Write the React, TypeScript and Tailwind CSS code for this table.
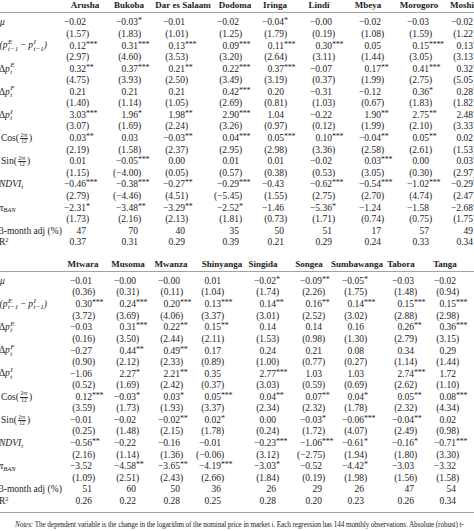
import type { ReactNode } from 'react';

type Block = {
  cols: string[];
  // header box width per column, header text is centred inside it
  heads: string[];
  grid: string;
  rows: string[][];
};

const TOP: Block = {
  cols: ['Arusha', 'Bukoba', 'Dar es Salaam', 'Dodoma', 'Iringa', 'Lindi', 'Mbeya', 'Morogoro', 'Moshi'],
  heads: ['w-[48px]', 'w-[32px]', 'w-[46px]', 'w-[42px]', 'w-[32px]', 'w-[24px]', 'w-[24px]', 'w-[30px]', 'w-[28px]'],
  grid: 'grid-cols-[61px_52px_47px_54px_45px_48px_49px_48px_44px_40px]',
  rows: [
    ['−0.02', '−0.03*', '−0.01', '−0.02', '−0.04*', '−0.00', '−0.02', '−0.03', '−0.02'],
    ['(1.57)', '(1.83)', '(1.01)', '(1.25)', '(1.79)', '(0.19)', '(1.08)', '(1.59)', '(1.22)'],
    ['0.12***', '0.31***', '0.13***', '0.09***', '0.11***', '0.30***', '0.05', '0.15****', '0.13***'],
    ['(2.97)', '(4.60)', '(3.53)', '(3.20)', '(2.64)', '(3.11)', '(1.44)', '(3.05)', '(3.13)'],
    ['0.32**', '0.37***', '0.21**', '0.22***', '0.37***', '−0.07', '0.17**', '0.41***', '0.32***'],
    ['(4.75)', '(3.93)', '(2.50)', '(3.49)', '(3.19)', '(0.37)', '(1.99)', '(2.75)', '(5.05)'],
    ['0.21', '0.21', '0.21', '0.42***', '0.20', '−0.31', '−0.12', '0.36*', '0.28*'],
    ['(1.40)', '(1.14)', '(1.05)', '(2.69)', '(0.81)', '(1.03)', '(0.67)', '(1.83)', '(1.82)'],
    ['3.03***', '1.96*', '1.98**', '2.90***', '1.04', '−0.22', '1.90**', '2.75**', '2.48***'],
    ['(3.07)', '(1.69)', '(2.24)', '(3.26)', '(0.97)', '(0.12)', '(1.99)', '(2.10)', '(3.33)'],
    ['0.03**', '0.03', '−0.03**', '0.04***', '0.05***', '0.10***', '−0.04**', '0.05**', '0.02'],
    ['(2.19)', '(1.58)', '(2.37)', '(2.95)', '(2.98)', '(3.36)', '(2.58)', '(2.61)', '(1.53)'],
    ['0.01', '−0.05***', '0.00', '0.01', '0.01', '−0.02', '0.03***', '0.00', '0.03***'],
    ['(1.15)', '(−4.00)', '(0.05)', '(0.57)', '(0.38)', '(0.53)', '(3.05)', '(0.30)', '(2.97)'],
    ['−0.46***', '−0.38***', '−0.27**', '−0.29***', '−0.43', '−0.62***', '−0.54***', '−1.02***', '−0.29**'],
    ['(2.79)', '(−4.46)', '(4.51)', '(−5.45)', '(1.55)', '(2.75)', '(2.70)', '(4.74)', '(2.47)'],
    ['−2.31*', '−3.48**', '−3.29**', '−2.52*', '−1.46', '−5.36*', '−1.24', '−1.58', '−2.68*'],
    ['(1.73)', '(2.16)', '(2.13)', '(1.81)', '(0.73)', '(1.71)', '(0.74)', '(0.75)', '(1.75)'],
    ['47', '70', '40', '35', '50', '51', '17', '57', '49'],
    ['0.37', '0.31', '0.29', '0.39', '0.21', '0.29', '0.24', '0.33', '0.34'],
  ],
};

const BOTTOM: Block = {
  cols: ['Mtwara', 'Musoma', 'Mwanza', 'Shinyanga', 'Singida', 'Songea', 'Sumbawanga', 'Tabora', 'Tanga'],
  heads: ['w-[32px]', 'w-[34px]', 'w-[32px]', 'w-[52px]', 'w-[24px]', 'w-[24px]', 'w-[36px]', 'w-[24px]', 'w-[28px]'],
  grid: 'grid-cols-[67px_44px_44px_41px_55px_46px_42px_50px_42px_43px]',
  rows: [
    ['−0.01', '−0.00', '−0.00', '0.01', '−0.02*', '−0.09**', '−0.05*', '−0.03', '−0.02'],
    ['(0.36)', '(0.31)', '(0.11)', '(1.04)', '(1.74)', '(2.26)', '(1.75)', '(1.48)', '(0.94)'],
    ['0.30***', '0.24***', '0.20***', '0.13***', '0.14**', '0.16**', '0.14***', '0.15***', '0.15***'],
    ['(3.72)', '(3.69)', '(4.06)', '(3.37)', '(3.01)', '(2.52)', '(3.02)', '(2.88)', '(2.98)'],
    ['−0.03', '0.31***', '0.22**', '0.15**', '0.14', '0.14', '0.16', '0.26**', '0.36***'],
    ['(0.16)', '(3.50)', '(2.44)', '(2.11)', '(1.53)', '(0.98)', '(1.30)', '(2.79)', '(3.15)'],
    ['−0.27', '0.44**', '0.49**', '0.17', '0.24', '0.21', '0.08', '0.34', '0.29'],
    ['(0.90)', '(2.12)', '(2.33)', '(0.89)', '(1.00)', '(0.77)', '(0.27)', '(1.14)', '(1.44)'],
    ['−1.06', '2.27*', '2.21**', '0.35', '2.77***', '1.03', '1.03', '2.74***', '1.72'],
    ['(0.52)', '(1.69)', '(2.42)', '(0.37)', '(3.03)', '(0.59)', '(0.69)', '(2.62)', '(1.10)'],
    ['0.12***', '−0.03*', '0.03*', '0.05***', '0.04**', '0.07**', '0.04*', '0.05**', '0.08***'],
    ['(3.59)', '(1.73)', '(1.93)', '(3.37)', '(2.34)', '(2.32)', '(1.78)', '(2.32)', '(4.34)'],
    ['−0.01', '−0.02', '−0.02**', '0.02*', '0.00', '−0.03*', '−0.06***', '−0.04**', '0.02'],
    ['(0.25)', '(1.48)', '(2.15)', '(1.78)', '(0.24)', '(1.72)', '(4.07)', '(2.49)', '(0.98)'],
    ['−0.56**', '−0.22', '−0.16', '−0.01', '−0.23***', '−1.06***', '−0.61*', '−0.16*', '−0.71***'],
    ['(2.16)', '(1.14)', '(1.36)', '(−0.06)', '(3.12)', '(−2.75)', '(1.94)', '(1.80)', '(3.30)'],
    ['−3.52', '−4.58**', '−3.65**', '−4.19***', '−3.03*', '−0.52', '−4.42*', '−3.03', '−3.32'],
    ['(1.09)', '(2.51)', '(2.43)', '(2.66)', '(1.84)', '(0.19)', '(1.98)', '(1.56)', '(1.58)'],
    ['51', '60', '50', '36', '26', '29', '26', '47', '54'],
    ['0.26', '0.22', '0.28', '0.25', '0.28', '0.20', '0.23', '0.26', '0.34'],
  ],
};

// p^E_t style index: superscript stacked over subscript
function Idx({ sup, sub }: { sup: string; sub: string }) {
  return (
    <span className="inline-flex flex-col align-middle text-[7px] leading-[6.5px] italic -mt-[1px] ml-[0.5px]">
      <span>{sup}</span>
      <span>{sub}</span>
    </span>
  );
}

function Frac() {
  return (
    <span className="inline-flex flex-col items-center align-middle text-[5.5px] leading-[5.5px] mx-[1px]">
      <span className="border-b-[0.5px] border-[#333] px-[0.5px]">2πt</span>
      <span>12</span>
    </span>
  );
}

const LABELS: ReactNode[] = [
  <span className="italic">μ</span>,
  <span className="-ml-[4.5px] italic">
    λ(p<Idx sup="E" sub="t−1" /> <span className="not-italic">−</span> p<Idx sup="I" sub="t−1" />)
  </span>,
  <span className="-ml-[1px]">Δ<i>p</i><Idx sup="E" sub="t" /></span>,
  <span className="-ml-[1px]">Δ<i>p</i><Idx sup="F" sub="t" /></span>,
  <span className="-ml-[1px]">Δ<i>p</i><Idx sup="I" sub="t" /></span>,
  <span className="ml-[1px]">Cos(<Frac />)</span>,
  <span className="ml-[1px]">Sin(<Frac />)</span>,
  <span className="italic -ml-[1px]">NDVI<sub className="text-[7px]">t</sub></span>,
  <span className="italic -ml-[1.5px]">π<sub className="text-[6.5px]">BAN</sub></span>,
  <span className="-ml-[1px]">3-month adj (%)</span>,
  <span className="-ml-[1px]">R<sup className="text-[6.5px]">2</sup></span>,
];

function Cell({ v }: { v: string }) {
  let num = v;
  let tail = '';
  if (v.endsWith(')')) {
    num = v.slice(0, -1);
    tail = ')';
  } else {
    const m = v.match(/^(.*?)(\**)$/);
    if (m) {
      num = m[1];
      tail = m[2];
    }
  }
  return (
    <div className="grid grid-cols-[25px_auto] whitespace-nowrap">
      <span className="text-right">{num}</span>
      {tail === ')' ? (
        <span>)</span>
      ) : (
        <span className="text-[8px] relative -top-[2px] tracking-[-0.3px]">{tail}</span>
      )}
    </div>
  );
}

function Panel({ b }: { b: Block }) {
  return (
    <div>
      <div className={`grid ${b.grid} h-[13px] items-start border-b-[1.5px] border-[#a3a3a3]`}>
        <div />
        {b.cols.map((c, i) => (
          <div key={c} className={`${b.heads[i]} flex justify-center font-semibold text-[9px] leading-[10px] whitespace-nowrap`}>
            {c}
          </div>
        ))}
      </div>
      <div className="pt-[4px]">
        {b.rows.map((r, i) => (
          <div key={i} className={`grid ${b.grid} h-[11.58px] items-center leading-[11px]`}>
            <div className="whitespace-nowrap">{i % 2 === 0 ? LABELS[i / 2] : i === 19 ? LABELS[10] : null}</div>
            {r.map((v, j) => (
              <Cell key={j} v={v} />
            ))}
          </div>
        ))}
      </div>
    </div>
  );
}

export default function App() {
  return (
    <div
      className="w-[474px] h-[531px] overflow-hidden bg-white text-[#1c1c1c] text-[9.5px]"
      style={{ fontFamily: '"Liberation Serif", "DejaVu Serif", serif' }}
    >
      <Panel b={TOP} />
      <div className="h-[10px]" />
      <div className="border-b-[1.5px] border-[#a3a3a3] pb-[5px]">
        <Panel b={BOTTOM} />
      </div>
      <p className="mt-[7px] text-[7.2px] tracking-[-0.1px] whitespace-nowrap pl-[15px]">
        <i>Notes:</i> The dependent variable is the change in the logarithm of the nominal price in market <i>i</i>. Each regression has 144 monthly observations. Absolute (robust) t-
      </p>
    </div>
  );
}
